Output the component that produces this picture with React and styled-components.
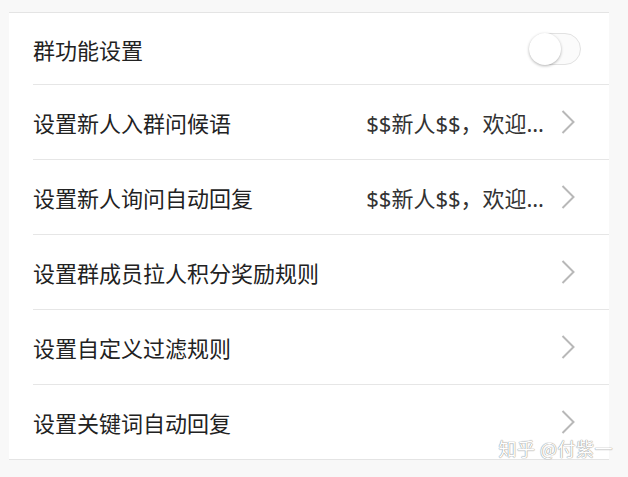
import React from "react";
import styled, { createGlobalStyle } from "styled-components";

const GlobalStyle = createGlobalStyle`
  body {
    margin: 0;
    background: #f8f8f8;
    font-family: "Noto Sans CJK SC", "Noto Sans", sans-serif;
  }
`;

const Page = styled.div`
  position: relative;
  width: 628px;
  height: 477px;
  padding: 12px 0 0 9px;
  box-sizing: border-box;
  overflow: hidden;
`;

const Card = styled.div`
  width: 600px;
  background: #fff;
  border-top: 1px solid #e4e4e4;
  border-bottom: 1px solid #e4e4e4;
  padding-left: 24px;
  box-sizing: border-box;
`;

const Row = styled.div`
  height: ${(p) => p.height || 74}px;
  display: flex;
  align-items: center;
  padding-right: ${(p) => (p.toggle ? 29 : 34)}px;
  border-bottom: ${(p) => (p.last ? "none" : "1px solid #e6e6e6")};
`;

const Label = styled.span`
  flex: 1;
  font-size: 22px;
  color: #222;
  white-space: nowrap;
`;

const Value = styled.span`
  font-family: "Noto Sans", "Noto Sans CJK SC", sans-serif;
  font-size: 22px;
  color: #333;
  margin-right: 17px;
  white-space: nowrap;
`;

const Toggle = styled.div`
  position: relative;
  width: 52px;
  height: 32px;
  border-radius: 16px;
  border: 1px solid #e2e2e2;
  background: #fbfbfb;
  box-sizing: border-box;
  margin-right: -1px;
`;

const Knob = styled.div`
  position: absolute;
  left: -1px;
  top: -1px;
  width: 32px;
  height: 32px;
  border-radius: 50%;
  background: #fff;
  box-shadow: 0 1px 3px rgba(0, 0, 0, 0.3);
`;

const Watermark = styled.div`
  position: absolute;
  right: 15px;
  bottom: 16px;
  font-size: 18px;
  color: #fff;
  letter-spacing: 0.5px;
  text-shadow: 0 0 1px #8a8a8a, 0 0 1px #8a8a8a;
`;

const Chevron = () => (
  <svg width="14" height="24" viewBox="0 0 14 24">
    <path d="M1.5 1 L12.5 12 L1.5 23" fill="none" stroke="#b8b8b8" strokeWidth="2" />
  </svg>
);

const items = [
  { label: "设置新人入群问候语", value: "$$新人$$，欢迎…" },
  { label: "设置新人询问自动回复", value: "$$新人$$，欢迎…" },
  { label: "设置群成员拉人积分奖励规则" },
  { label: "设置自定义过滤规则" },
  { label: "设置关键词自动回复" },
];

const App = () => (
  <Page>
    <GlobalStyle />
    <Card>
      <Row height={71} toggle>
        <Label>群功能设置</Label>
        <Toggle>
          <Knob />
        </Toggle>
      </Row>
      {items.map((item, i) => (
        <Row key={item.label} last={i === items.length - 1}>
          <Label>{item.label}</Label>
          {item.value && <Value>{item.value}</Value>}
          <Chevron />
        </Row>
      ))}
    </Card>
    <Watermark>知乎 @付紫一</Watermark>
  </Page>
);

export default App;
